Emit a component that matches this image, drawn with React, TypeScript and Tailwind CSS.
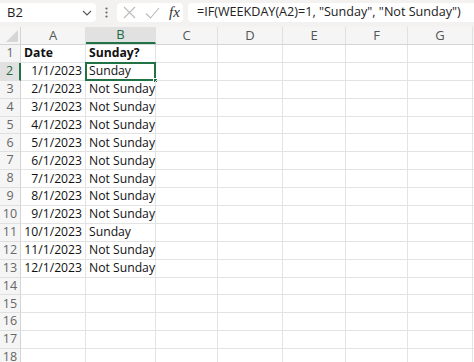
import React from "react";

const cols = [
  { name: "A", w: "w-[65px]" },
  { name: "B", w: "w-[70px]" },
  { name: "C", w: "w-[62px]" },
  { name: "D", w: "w-[65px]" },
  { name: "E", w: "w-[63px]" },
  { name: "F", w: "w-[62px]" },
  { name: "G", w: "w-[65px]" },
  { name: "H", w: "w-[63px]" },
];

const data: [string, string][] = [
  ["1/1/2023", "Sunday"],
  ["2/1/2023", "Not Sunday"],
  ["3/1/2023", "Not Sunday"],
  ["4/1/2023", "Not Sunday"],
  ["5/1/2023", "Not Sunday"],
  ["6/1/2023", "Not Sunday"],
  ["7/1/2023", "Not Sunday"],
  ["8/1/2023", "Not Sunday"],
  ["9/1/2023", "Not Sunday"],
  ["10/1/2023", "Sunday"],
  ["11/1/2023", "Not Sunday"],
  ["12/1/2023", "Not Sunday"],
];

const font = { fontFamily: "'Open Sans', 'Noto Sans', sans-serif" };

const Toolbar = () => (
  <div className="h-[27px] bg-[#f3f2f1] flex items-start pt-[3px] shrink-0">
    <div className="w-[96px] h-[19px] bg-white rounded-r-[4px] flex items-center justify-between pl-[7px] pr-[4px] text-[13px] text-[#222]">
      <span>B2</span>
      <svg width="10" height="6" viewBox="0 0 10 6" fill="none" stroke="#555" strokeWidth="1.1">
        <path d="M1 1l4 4 4-4" />
      </svg>
    </div>
    <div className="w-[21px] h-[19px] flex items-center justify-center">
      <svg width="3" height="11" viewBox="0 0 3 11" fill="#666">
        <circle cx="1.5" cy="1.5" r="1.1" />
        <circle cx="1.5" cy="5.5" r="1.1" />
        <circle cx="1.5" cy="9.5" r="1.1" />
      </svg>
    </div>
    <div className="w-[66px] h-[19px] bg-white rounded-[4px] flex items-center pl-[6px] gap-[9px]">
      <svg width="13" height="13" viewBox="0 0 13 13" fill="none" stroke="#bbb" strokeWidth="1.1">
        <path d="M1 1l11 11M12 1L1 12" />
      </svg>
      <svg width="15" height="12" viewBox="0 0 15 12" fill="none" stroke="#bbb" strokeWidth="1.1">
        <path d="M1 6.5l4.5 4.5L14 1" />
      </svg>
      <span className="text-[15px] italic text-[#333] leading-none" style={{ fontFamily: "'Liberation Serif', serif" }}>
        fx
      </span>
    </div>
    <div className="flex-1 ml-[5px] h-[19px] bg-white rounded-l-[4px] flex items-center pl-[9px] text-[12.6px] text-[#222] whitespace-nowrap">
      =IF(WEEKDAY(A2)=1, "Sunday", "Not Sunday")
    </div>
  </div>
);

const HeaderRow = () => (
  <div className="flex h-[18px] bg-[#f5f5f5] border-b border-[#d4d4d4] shrink-0">
    <div className="w-[21px] shrink-0 border-r border-[#d4d4d4] relative">
      <svg className="absolute right-[2px] bottom-[2px]" width="12" height="12" viewBox="0 0 12 12">
        <path d="M12 0V12H0Z" fill="#d6d6d6" />
      </svg>
    </div>
    {cols.map((c) => (
      <div
        key={c.name}
        className={`${c.w} shrink-0 flex items-center justify-center text-[13px] border-r border-[#e0e0e0] ${
          c.name === "B" ? "bg-[#e1e1e1] text-[#1e6b41] border-b-2 border-b-[#217346]" : "text-[#555]"
        }`}
      >
        {c.name}
      </div>
    ))}
  </div>
);

const Row = ({ n }: { n: number }) => {
  const d = n >= 2 && n <= 13 ? data[n - 2] : null;
  const sel = n === 2;
  return (
    <div className="flex h-[17.9px] shrink-0">
      <div
        className={`w-[21px] shrink-0 flex items-center justify-center text-[12.5px] border-b border-[#e0e0e0] ${
          sel ? "bg-[#e1e1e1] text-[#1e6b41] border-r-2 border-r-[#217346]" : "bg-[#f5f5f5] text-[#666] border-r border-r-[#d4d4d4]"
        }`}
      >
        {n}
      </div>
      {cols.map((c, i) => {
        let content: React.ReactNode = null;
        let cls = "";
        if (n === 1 && i === 0) content = "Date";
        if (n === 1 && i === 1) content = "Sunday?";
        if (n === 1) cls = "font-bold";
        if (d && i === 0) {
          content = d[0];
          cls = "justify-end pr-[3px]";
        }
        if (d && i === 1) content = d[1];
        const isSel = sel && i === 1;
        return (
          <div
            key={c.name}
            className={`${c.w} shrink-0 flex items-center pl-[3px] text-[12.2px] text-[#111] whitespace-nowrap relative border-r border-b border-[#e3e3e3] ${cls}`}
          >
            {content}
            {isSel && (
              <>
                <div className="absolute -left-[1px] -top-[1px] right-[-1px] bottom-[-1px] border-2 border-[#217346]" />
                <div className="absolute right-[-3px] bottom-[-3px] w-[5px] h-[5px] bg-[#217346] border border-white" />
              </>
            )}
          </div>
        );
      })}
    </div>
  );
};

export default function App() {
  return (
    <div className="w-[474px] h-[362px] overflow-hidden bg-white flex flex-col" style={font}>
      <Toolbar />
      <HeaderRow />
      {Array.from({ length: 18 }, (_, i) => (
        <Row key={i} n={i + 1} />
      ))}
    </div>
  );
}
